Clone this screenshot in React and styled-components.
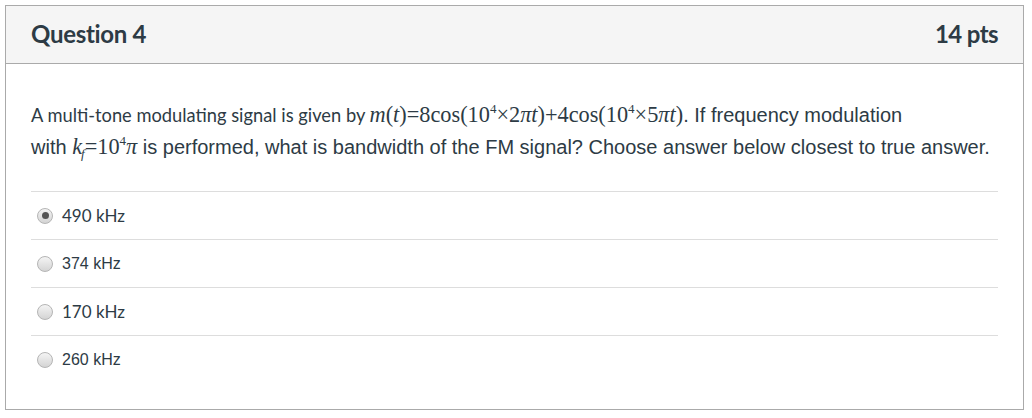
import styled, { createGlobalStyle } from "styled-components";

const GlobalStyle = createGlobalStyle`
  html, body {
    margin: 0;
    padding: 0;
    background: #fff;
  }
  body {
    padding: 5px 8px 0 5px;
    font-family: Lato, "Liberation Sans", sans-serif;
    color: #2d3b45;
  }
`;

const QuestionCard = styled.div`
  width: 1019px;
  height: 405px;
  box-sizing: border-box;
  border: 1px solid #aaaaaa;
  background: #fff;
`;

const Header = styled.div`
  display: flex;
  justify-content: space-between;
  align-items: center;
  height: 58px;
  box-sizing: border-box;
  padding: 0 25px 2px 25px;
  background: #f5f5f5;
  border-bottom: 1px solid #aaaaaa;
  font-family: Lato, sans-serif;
  font-weight: 700;
  font-size: 24px;
  color: #2d3b45;
  letter-spacing: -0.3px;
`;

const Points = styled.span`
  letter-spacing: -0.6px;
`;

const Body = styled.div`
  padding: 35px 25px 0 25px;
`;

const Prompt = styled.div`
  font-family: "Liberation Sans", Arial, sans-serif;
  font-size: 20px;
  line-height: 32px;
  height: 64px;
  color: #2d3b45;
  margin-bottom: 28px;
`;

const Lato = styled.span`
  font-family: Lato, sans-serif;
  font-size: 18.3px;
  line-height: 1;
`;

const Plain = styled.span`
  font-family: "Liberation Sans", Arial, sans-serif;
  font-size: 20px;
`;

const Math = styled.span`
  font-family: "Liberation Serif", "Times New Roman", serif;
  font-size: 22.3px;
  line-height: 1;
  i {
    font-style: italic;
  }
  sup {
    font-size: 13px;
    vertical-align: 9px;
    line-height: 0;
  }
  sub {
    font-size: 13px;
    vertical-align: -4px;
    line-height: 0;
    margin-left: -1px;
  }
`;

const AnswerList = styled.div`
  display: flex;
  flex-direction: column;
`;

const Answer = styled.label`
  display: flex;
  align-items: center;
  gap: 9px;
  height: 47px;
  border-top: 1px solid #dddddd;
  padding-left: 6px;
  font-family: ${(p) => (p.$lato ? "Lato, sans-serif" : '"Liberation Sans", Arial, sans-serif')};
  font-size: ${(p) => (p.$lato ? "17px" : "16px")};
  color: #2d3b45;
`;

const Radio = styled.span`
  width: 16px;
  height: 16px;
  border-radius: 50%;
  box-sizing: border-box;
  border: 1px solid #b5b5b5;
  background: linear-gradient(#f4f4f4, #d4d4d4);
  display: flex;
  align-items: center;
  justify-content: center;
  &::after {
    content: "";
    display: ${(p) => (p.$checked ? "block" : "none")};
    width: 7px;
    height: 7px;
    border-radius: 50%;
    background: #555;
  }
`;

const answers = [
  { label: "490 kHz", checked: true, lato: true },
  { label: "374 kHz" },
  { label: "170 kHz", lato: true },
  { label: "260 kHz" },
];

export default function App() {
  return (
    <>
      <GlobalStyle />
      <QuestionCard>
        <Header>
          <span>Question 4</span>
          <Points>14 pts</Points>
        </Header>
        <Body>
          <Prompt>
            <Lato>A multi-tone modulating signal is given by </Lato>
            <Math>
              <i>m</i>(<i>t</i>)=8cos(10<sup>4</sup>×2<i>πt</i>)+4cos(10<sup>4</sup>×5<i>πt</i>)
            </Math>
            <Plain>. If frequency modulation</Plain>
            <br />
            <Plain>with </Plain>
            <Math>
              <i>k</i>
              <sub>
                <i>f</i>
              </sub>
              =10<sup>4</sup>
              <i>π</i>
            </Math>
            <Plain> is performed, what is bandwidth of the FM signal? Choose answer below closest to true answer.</Plain>
          </Prompt>
          <AnswerList>
            {answers.map((a) => (
              <Answer key={a.label} $lato={a.lato}>
                <Radio $checked={a.checked} />
                <span>{a.label}</span>
              </Answer>
            ))}
          </AnswerList>
        </Body>
      </QuestionCard>
    </>
  );
}
